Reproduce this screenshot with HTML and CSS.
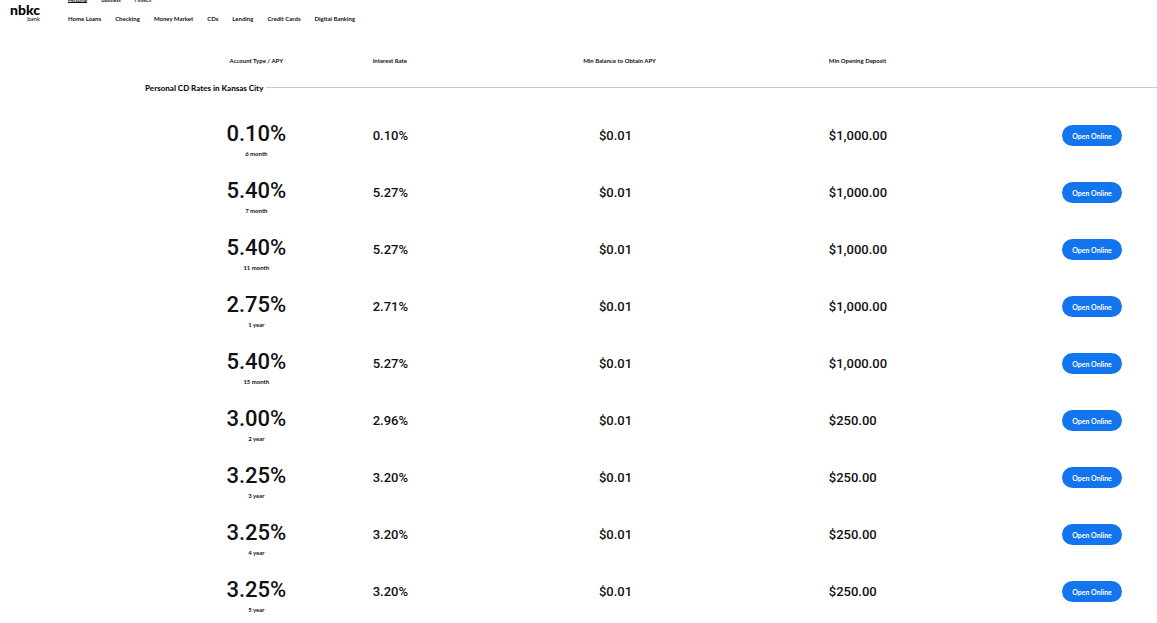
FILE: index.html
```html
<!DOCTYPE html>
<html lang="en">

<head>
  <meta charset="UTF-8">
  <meta name="viewport" content="width=device-width, initial-scale=1.0">
  <title>CD Rates | nbkc bank</title>
  <link rel="stylesheet" href="styles.css">
</head>

<body>
  <header class="header">
    <a class="logo" href="#">
      <span class="logo-name">nbkc</span>
      <span class="logo-sub">bank</span>
    </a>
    <div class="menus">
      <nav class="top-nav" aria-label="Sites">
        <a class="cur" href="#">Personal</a>
        <a href="#">Business</a>
        <a href="#">Fintech</a>
      </nav>
      <nav class="main-nav" aria-label="Main">
        <a href="#">Home Loans</a>
        <a href="#">Checking</a>
        <a href="#">Money Market</a>
        <a href="#">CDs</a>
        <a href="#">Lending</a>
        <a href="#">Credit Cards</a>
        <a href="#">Digital Banking</a>
      </nav>
    </div>
  </header>

  <main class="main">
    <table class="rates">
      <thead>
        <tr>
          <th class="apy" scope="col">Account Type / APY</th>
          <th class="rate" scope="col">Interest Rate</th>
          <th class="balance" scope="col">Min Balance to Obtain APY</th>
          <th class="deposit" scope="col">Min Opening Deposit</th>
          <td class="action"></td>
        </tr>
      </thead>
      <tbody>
        <tr>
          <th class="group" colspan="5" scope="colgroup">
            <div class="group-title">Personal CD Rates in Kansas City</div>
          </th>
        </tr>
        <tr class="row">
          <td class="apy"><strong>0.10%</strong><small>6 month</small></td>
          <td class="rate">0.10%</td>
          <td class="balance">$0.01</td>
          <td class="deposit">$1,000.00</td>
          <td class="action"><button class="btn" type="button">Open Online</button></td>
        </tr>
        <tr class="row">
          <td class="apy"><strong>5.40%</strong><small>7 month</small></td>
          <td class="rate">5.27%</td>
          <td class="balance">$0.01</td>
          <td class="deposit">$1,000.00</td>
          <td class="action"><button class="btn" type="button">Open Online</button></td>
        </tr>
        <tr class="row">
          <td class="apy"><strong>5.40%</strong><small>11 month</small></td>
          <td class="rate">5.27%</td>
          <td class="balance">$0.01</td>
          <td class="deposit">$1,000.00</td>
          <td class="action"><button class="btn" type="button">Open Online</button></td>
        </tr>
        <tr class="row">
          <td class="apy"><strong>2.75%</strong><small>1 year</small></td>
          <td class="rate">2.71%</td>
          <td class="balance">$0.01</td>
          <td class="deposit">$1,000.00</td>
          <td class="action"><button class="btn" type="button">Open Online</button></td>
        </tr>
        <tr class="row">
          <td class="apy"><strong>5.40%</strong><small>15 month</small></td>
          <td class="rate">5.27%</td>
          <td class="balance">$0.01</td>
          <td class="deposit">$1,000.00</td>
          <td class="action"><button class="btn" type="button">Open Online</button></td>
        </tr>
        <tr class="row">
          <td class="apy"><strong>3.00%</strong><small>2 year</small></td>
          <td class="rate">2.96%</td>
          <td class="balance">$0.01</td>
          <td class="deposit">$250.00</td>
          <td class="action"><button class="btn" type="button">Open Online</button></td>
        </tr>
        <tr class="row">
          <td class="apy"><strong>3.25%</strong><small>3 year</small></td>
          <td class="rate">3.20%</td>
          <td class="balance">$0.01</td>
          <td class="deposit">$250.00</td>
          <td class="action"><button class="btn" type="button">Open Online</button></td>
        </tr>
        <tr class="row">
          <td class="apy"><strong>3.25%</strong><small>4 year</small></td>
          <td class="rate">3.20%</td>
          <td class="balance">$0.01</td>
          <td class="deposit">$250.00</td>
          <td class="action"><button class="btn" type="button">Open Online</button></td>
        </tr>
        <tr class="row">
          <td class="apy"><strong>3.25%</strong><small>5 year</small></td>
          <td class="rate">3.20%</td>
          <td class="balance">$0.01</td>
          <td class="deposit">$250.00</td>
          <td class="action"><button class="btn" type="button">Open Online</button></td>
        </tr>
      </tbody>
    </table>
  </main>
</body>

</html>
```
FILE: styles.css
```css
* {
  margin: 0;
  padding: 0;
  box-sizing: border-box;
}

body {
  font-family: Lato, "Liberation Sans", sans-serif;
  font-size: 6px;
  color: #111;
  background-color: #fff;
}

a {
  color: inherit;
  text-decoration: none;
}

.header {
  display: flex;
  gap: 28px;
  padding-left: 10px;
  overflow: hidden;
}

.logo {
  display: flex;
  flex-direction: column;
  align-items: flex-end;
  width: 30px;
  padding-top: 4px;
  color: #000;
}

.logo-name {
  font-size: 14px;
  font-weight: 900;
  line-height: 12px;
}

.logo-sub {
  font-size: 6px;
  line-height: 6px;
}

/* the site links are scrolled halfway off the top */
.menus {
  margin-top: -4px;
  font-weight: 700;
}

.top-nav {
  display: flex;
  gap: 14px;
  font-size: 5px;
  line-height: 8px;
}

.top-nav .cur {
  height: 7px;
  border-bottom: 1px solid #111;
}

.main-nav {
  display: flex;
  gap: 14px;
  padding: 11px 0;
  line-height: 8px;
}

.main {
  padding: 18px 0 0 145px;
}

.rates {
  width: 100%;
  table-layout: fixed;
  border-collapse: collapse;
}

.rates thead th {
  height: 16px;
  font-weight: 700;
}

.apy {
  width: 22%;
  text-align: center;
}

.rate {
  width: 14%;
  padding-left: 5px;
  text-align: left;
}

.balance {
  width: 21%;
  text-align: center;
}

.deposit {
  width: 23%;
  padding-left: 107px;
  text-align: left;
}

.rates thead .balance {
  padding-left: 8px;
}

.action {
  padding-right: 35px;
  text-align: right;
}

.group {
  height: 39px;
}

.group-title {
  display: flex;
  align-items: center;
  gap: 3px;
  font-size: 8px;
  font-weight: 900;
}

.group-title::after {
  content: "";
  flex: 1;
  height: 1px;
  background-color: #ccc;
}

.row td {
  height: 57px;
  font-family: Roboto, "Liberation Sans", sans-serif;
  font-size: 13px;
  font-weight: 500;
  vertical-align: middle;
}

.row .apy {
  padding-top: 6px;
}

.row strong {
  display: block;
  font-size: 22px;
  font-weight: 500;
  line-height: 28px;
}

.row small {
  display: block;
  padding-top: 2px;
  font-family: Lato, "Liberation Sans", sans-serif;
  font-size: 6px;
  font-weight: 700;
  line-height: 8px;
}

.btn {
  width: 60px;
  height: 21px;
  border: 0;
  border-radius: 11px;
  font-family: Lato, "Liberation Sans", sans-serif;
  font-size: 7px;
  font-weight: 700;
  color: #fff;
  background-color: #1275ee;
  cursor: pointer;
}
```
